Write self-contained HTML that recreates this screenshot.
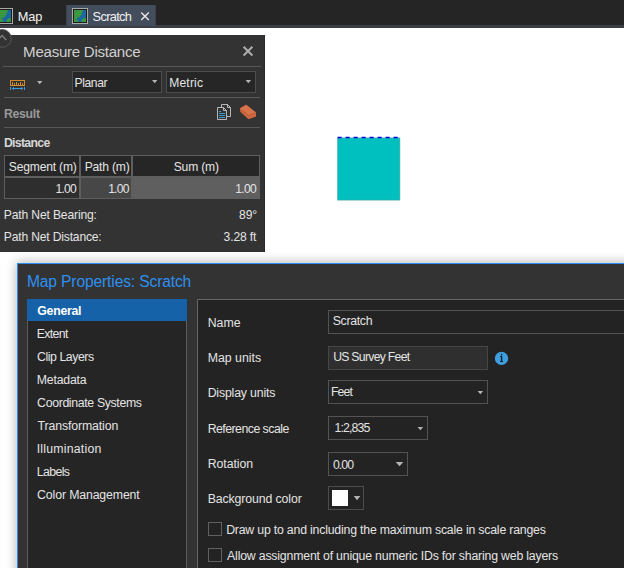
<!DOCTYPE html>
<html lang="en">
<head>
<meta charset="utf-8">
<title>Map Properties: Scratch</title>
<style>
html,body{margin:0;padding:0;overflow:hidden;}
html{width:624px;height:568px;}
body{width:624px;height:568px;position:relative;overflow:hidden;background:#ffffff;font-family:"Liberation Sans",sans-serif;}
.abs,.t,svg{position:absolute;}
svg{overflow:visible;}
.t{white-space:nowrap;line-height:20px;height:20px;}
.box{position:absolute;box-sizing:border-box;}
.ln{position:absolute;left:4px;width:256px;height:1px;background:#585858;}
.fld{position:absolute;box-sizing:border-box;background:#232323;border:1px solid #535353;}
.chk{position:absolute;box-sizing:border-box;width:14px;height:14px;left:208px;background:#232323;border:1px solid #606060;}
.cell{position:absolute;box-sizing:border-box;}
</style>
</head>
<body>
<div id="screen" style="position:absolute;left:0;top:0;width:624px;height:568px;overflow:hidden;background:#ffffff;">
<!-- document tab bar -->
<div class="abs" id="tabbar" style="left:0;top:0;width:624px;height:25px;background:#252525;"></div>
<div class="abs" id="tabstrip" style="left:0;top:25px;width:624px;height:3px;background:#3c3e46;"></div>
<div class="abs" id="tab-scratch" style="left:66px;top:5px;width:88px;height:21px;background:#444d5c;border-left:1px solid #3b414d;border-right:1px solid #3b414d;"></div>
<svg id="ico-map1" style="left:-3px;top:8px" width="16" height="16" viewBox="0 0 16 16"><rect x=".5" y=".5" width="15" height="15" fill="none" stroke="#a9a9a6"/><rect x="1.5" y="1.5" width="13" height="13" fill="#3c983e" stroke="#1c1c1c"/><path d="M11 2H14V10.5L12 10L10 11.5L9.3 14H6.6L6.2 12L4.5 11.2L5.5 9.6L7.2 9.6L9 7.2L10 5Z" fill="#1b67a1"/></svg>
<svg id="ico-map2" style="left:72px;top:8px" width="16" height="16" viewBox="0 0 16 16"><rect x=".5" y=".5" width="15" height="15" fill="none" stroke="#a9a9a6"/><rect x="1.5" y="1.5" width="13" height="13" fill="#3c983e" stroke="#1c1c1c"/><path d="M11 2H14V10.5L12 10L10 11.5L9.3 14H6.6L6.2 12L4.5 11.2L5.5 9.6L7.2 9.6L9 7.2L10 5Z" fill="#1b67a1"/></svg>
<svg id="ico-tabclose" style="left:140px;top:11px" width="10" height="10" viewBox="0 0 10 10"><path d="M1.2 1.5L8.8 9M8.8 1.5L1.2 9" stroke="#e8e8e8" stroke-width="1.4" fill="none"/></svg>

<!-- map view content -->
<svg id="square" style="left:337px;top:136px" width="64" height="65" viewBox="0 0 64 65"><rect x="0.5" y="1.9" width="62.4" height="62.2" fill="#00bfbf" stroke="#4fa9a9" stroke-width="0.6"/><line x1="0.6" y1="1.5" x2="63" y2="1.5" stroke="#0000ee" stroke-width="1.5" stroke-dasharray="4 4"/></svg>

<!-- Measure Distance panel -->
<div class="abs" id="measure" style="left:0;top:35px;width:264px;height:217px;background:#333333;border-right:1px solid #2a2a2a;"></div>
<svg id="ico-collapse" style="left:-8px;top:28px" width="21" height="21" viewBox="-10.5 -10.5 21 21"><circle cx="-0.2" cy="-0.1" r="8.9" fill="#333333" stroke="#585858" stroke-width="1"/><path d="M-4.6 1.4L-0.4 -3L3.8 1.4" fill="none" stroke="#7c7c7c" stroke-width="1.5"/></svg>
<svg id="ico-close" style="left:242px;top:45px" width="12" height="12" viewBox="0 0 12 12"><path d="M1.6 1.8L10.4 10.4M10.4 1.8L1.6 10.4" stroke="#ababab" stroke-width="2.1" fill="none"/></svg>
<div class="ln" style="top:66px;left:3px;width:258px"></div>
<div class="ln" style="top:97px"></div>
<div class="ln" style="top:127px"></div>
<svg id="ico-ruler" style="left:9px;top:79px" width="17" height="12" viewBox="0 0 17 12"><rect x="1.5" y="1.5" width="14" height="5" fill="none" stroke="#cf8a2e"/><path d="M3.5 3V6M5.5 4.2V6M7.5 3V6M9.5 4.2V6M11.5 3V6M13.5 4.2V6" stroke="#cf8a2e" stroke-width="1"/><path d="M1.5 8V11M15.5 8V11M3 9.5H14" stroke="#3a9fe0" stroke-width="1" fill="none"/><path d="M2.6 9.5L5 8V11ZM14.4 9.5L12 8V11Z" fill="#3a9fe0"/></svg>
<svg id="ico-dd0" style="left:37px;top:81px" width="6" height="4" viewBox="0 0 6 4"><path d="M0 0H5.4L2.7 3.2Z" fill="#b4b4b4"/></svg>
<div class="box" id="cmb-planar" style="left:72px;top:71px;width:90px;height:22px;background:#262626;border:1px solid #4d4d4d;"></div>
<div class="box" id="cmb-metric" style="left:166px;top:71px;width:90px;height:22px;background:#262626;border:1px solid #4d4d4d;"></div>
<svg style="left:152px;top:80px" width="6" height="4" viewBox="0 0 6 4"><path d="M0 0H5.4L2.7 3.2Z" fill="#b4b4b4"/></svg>
<svg style="left:245px;top:80px" width="7" height="4" viewBox="0 0 7 4"><path d="M0.6 0H6.1L3.35 3.2Z" fill="#b4b4b4"/></svg>
<svg id="ico-copy" style="left:217px;top:104px" width="15" height="16" viewBox="0 0 15 16"><path d="M4.5 3V0.5H10.5L13.5 3.5V12.5H10" fill="none" stroke="#b8b8b8"/><path d="M10.5 0.5V3.5H13.5" fill="none" stroke="#b8b8b8"/><path d="M0.5 3.5H6.5L9.5 6.5V15.5H0.5Z" fill="#333333" stroke="#b8b8b8"/><path d="M6.5 3.5V6.5H9.5" fill="none" stroke="#b8b8b8"/><path d="M2 7.5H4M2 9.5H8M2 11.5H8M2 13.5H8" stroke="#3b9ad6" stroke-width="1"/></svg>
<svg id="ico-eraser" style="left:239px;top:104px" width="18" height="16" viewBox="0 0 18 16"><path d="M1.6 4.6L7.1 1.3L16.4 8.6V12.2L9.7 14.5L1.9 7.6Z" fill="#cf6840" stroke="#cf6840" stroke-width="1.2" stroke-linejoin="round"/><path d="M1.6 4.6L7.1 1.3L16.4 8.6L9.6 10.9Z" fill="#d8744b"/><path d="M1.5 5.3L9.6 11.5L16.5 9.1" fill="none" stroke="#b9572f" stroke-width="0.8"/></svg>

<!-- result table -->
<div class="cell" style="left:4px;top:155px;width:256px;height:44px;background:#5e5e5e;"></div>
<div class="cell" id="h1" style="left:5px;top:156px;width:74px;height:20px;background:#262626;"></div>
<div class="cell" id="h2" style="left:81px;top:156px;width:50px;height:20px;background:#262626;"></div>
<div class="cell" id="h3" style="left:133px;top:156px;width:126px;height:20px;background:#262626;"></div>
<div class="cell" id="d1" style="left:5px;top:178px;width:74px;height:20px;background:#2e2e2e;"></div>
<div class="cell" id="d2" style="left:81px;top:178px;width:50px;height:20px;background:#474747;"></div>
<div class="cell" id="d3" style="left:133px;top:178px;width:126px;height:20px;background:#5f5f5f;"></div>

<!-- Map Properties dialog -->
<div class="box" id="dialog" style="left:17px;top:263px;width:620px;height:320px;background:#333333;border:1px solid #2b8df2;box-shadow:0 0 10px 1px rgba(0,0,0,0.28);"></div>
<div class="box" id="list" style="left:27px;top:299px;width:160px;height:280px;background:#252525;border:1px solid #5c5c5c;"></div>
<div class="abs" id="list-sel" style="left:27px;top:299px;width:160px;height:22px;background:#1562a8;"></div>
<div class="box" id="pane" style="left:197px;top:299px;width:440px;height:280px;background:#232323;border:1px solid #656565;"></div>
<div class="fld" id="f-name" style="left:328px;top:310px;width:320px;height:24px;"></div>
<div class="fld" id="f-mapunits" style="left:328px;top:346px;width:160px;height:24px;background:#2f2f2f;border-color:#464646;"></div>
<svg id="ico-info" style="left:494px;top:351px" width="15" height="15" viewBox="0 0 15 15"><circle cx="7.5" cy="7.4" r="6.65" fill="#3d9fe0"/><rect x="6.9" y="2.7" width="1.4" height="1.7" rx="0.6" fill="#10222f"/><path d="M6 5H8.3V10H9.1V11H6V10H6.9V6H6Z" fill="#10222f"/></svg>
<div class="fld" id="f-display" style="left:328px;top:380px;width:160px;height:24px;"></div>
<svg style="left:477px;top:391px" width="7" height="4" viewBox="0 0 7 4"><path d="M0.6 0H6.2L3.4 3.3Z" fill="#b4b4b4"/></svg>
<div class="fld" id="f-refscale" style="left:328px;top:416px;width:100px;height:24px;"></div>
<svg style="left:417px;top:427px" width="7" height="4" viewBox="0 0 7 4"><path d="M0.6 0H6.2L3.4 3.3Z" fill="#b4b4b4"/></svg>
<div class="fld" id="f-rotation" style="left:328px;top:452px;width:80px;height:24px;"></div>
<svg style="left:395px;top:461px" width="9" height="6" viewBox="0 0 9 6"><path d="M0.7 0.9H8.3L4.5 5.3Z" fill="#b4b4b4"/></svg>
<div class="fld" id="f-bgcolor" style="left:328px;top:486px;width:36px;height:24px;border-color:#4c4c4c;"></div>
<div class="abs" id="swatch" style="left:332px;top:490px;width:16px;height:16px;background:#ffffff;"></div>
<svg style="left:353px;top:496px" width="8" height="5" viewBox="0 0 8 5"><path d="M0.8 0H7.3L4.05 4.2Z" fill="#b4b4b4"/></svg>
<div class="chk" style="top:522px"></div>
<div class="chk" style="top:548px"></div>

<span class="t" style="left:17.80px;top:6.56px;font-size:12.8px;color:#f2f2f2;letter-spacing:-0.191px;">Map</span>
<span class="t" style="left:92.60px;top:6.56px;font-size:12.8px;color:#f2f2f2;letter-spacing:-0.679px;">Scratch</span>
<span class="t" style="left:23.12px;top:41.77px;font-size:15.1px;color:#d0d0d0;letter-spacing:-0.280px;">Measure Distance</span>
<span class="t" style="left:74.55px;top:72.81px;font-size:12.1px;color:#e4e4e4;letter-spacing:-0.394px;">Planar</span>
<span class="t" style="left:169.25px;top:72.81px;font-size:12.1px;color:#e4e4e4;letter-spacing:0.159px;">Metric</span>
<span class="t" style="left:3.93px;top:103.74px;font-size:12.3px;color:#9a9a9a;font-weight:700;letter-spacing:-0.292px;">Result</span>
<span class="t" style="left:3.93px;top:132.74px;font-size:12.3px;color:#d6d6d6;font-weight:700;letter-spacing:-0.700px;">Distance</span>
<span class="t" style="left:8.82px;top:156.81px;font-size:12.1px;color:#e4e4e4;letter-spacing:-0.183px;">Segment (m)</span>
<span class="t" style="left:84.65px;top:156.81px;font-size:12.1px;color:#e4e4e4;letter-spacing:-0.189px;">Path (m)</span>
<span class="t" style="left:173.73px;top:156.81px;font-size:12.1px;color:#e4e4e4;letter-spacing:-0.18px;">Sum (m)</span>
<span class="t" style="left:55.44px;top:178.81px;font-size:12.1px;color:#e4e4e4;letter-spacing:-0.731px;">1.00</span>
<span class="t" style="left:108.14px;top:178.81px;font-size:12.1px;color:#e4e4e4;letter-spacing:-0.731px;">1.00</span>
<span class="t" style="left:235.34px;top:178.81px;font-size:12.1px;color:#e4e4e4;letter-spacing:-0.731px;">1.00</span>
<span class="t" style="left:3.85px;top:204.81px;font-size:12.1px;color:#e4e4e4;letter-spacing:-0.148px;">Path Net Bearing:</span>
<span class="t" style="left:239.08px;top:204.81px;font-size:12.1px;color:#e4e4e4;letter-spacing:-0.15px;">89°</span>
<span class="t" style="left:3.85px;top:226.81px;font-size:12.1px;color:#e4e4e4;letter-spacing:-0.173px;">Path Net Distance:</span>
<span class="t" style="left:223.62px;top:226.81px;font-size:12.1px;color:#e4e4e4;letter-spacing:-0.133px;">3.28 ft</span>
<span class="t" style="left:26.98px;top:271.59px;font-size:15.6px;color:#2d90f0;letter-spacing:-0.134px;">Map Properties: Scratch</span>
<span class="t" style="left:37.32px;top:300.74px;font-size:12.3px;color:#ffffff;font-weight:700;letter-spacing:-0.266px;">General</span>
<span class="t" style="left:36.74px;top:323.74px;font-size:12.3px;color:#e4e4e4;letter-spacing:-0.630px;">Extent</span>
<span class="t" style="left:37.12px;top:346.74px;font-size:12.3px;color:#e4e4e4;letter-spacing:-0.446px;">Clip Layers</span>
<span class="t" style="left:36.74px;top:369.74px;font-size:12.3px;color:#e4e4e4;letter-spacing:-0.200px;">Metadata</span>
<span class="t" style="left:37.12px;top:392.74px;font-size:12.3px;color:#e4e4e4;letter-spacing:-0.346px;">Coordinate Systems</span>
<span class="t" style="left:37.51px;top:415.74px;font-size:12.3px;color:#e4e4e4;letter-spacing:-0.113px;">Transformation</span>
<span class="t" style="left:36.74px;top:438.74px;font-size:12.3px;color:#e4e4e4;letter-spacing:0.212px;">Illumination</span>
<span class="t" style="left:36.74px;top:461.74px;font-size:12.3px;color:#e4e4e4;letter-spacing:-0.600px;">Labels</span>
<span class="t" style="left:37.12px;top:484.74px;font-size:12.3px;color:#e4e4e4;letter-spacing:-0.131px;">Color Management</span>
<span class="t" style="left:207.64px;top:312.74px;font-size:12.3px;color:#e4e4e4;letter-spacing:0.050px;">Name</span>
<span class="t" style="left:207.64px;top:347.74px;font-size:12.3px;color:#e4e4e4;letter-spacing:0.027px;">Map units</span>
<span class="t" style="left:207.64px;top:382.74px;font-size:12.3px;color:#e4e4e4;letter-spacing:-0.165px;">Display units</span>
<span class="t" style="left:207.64px;top:418.74px;font-size:12.3px;color:#e4e4e4;letter-spacing:-0.516px;">Reference scale</span>
<span class="t" style="left:207.64px;top:453.74px;font-size:12.3px;color:#e4e4e4;letter-spacing:-0.037px;">Rotation</span>
<span class="t" style="left:207.64px;top:488.74px;font-size:12.3px;color:#e4e4e4;letter-spacing:-0.100px;">Background color</span>
<span class="t" style="left:332.72px;top:310.74px;font-size:12.3px;color:#e4e4e4;letter-spacing:-0.321px;">Scratch</span>
<span class="t" style="left:333.14px;top:346.77px;font-size:12.2px;color:#e4e4e4;letter-spacing:-0.691px;">US Survey Feet</span>
<span class="t" style="left:331.05px;top:381.77px;font-size:12.2px;color:#e4e4e4;letter-spacing:-0.867px;">Feet</span>
<span class="t" style="left:334.43px;top:417.74px;font-size:12.3px;color:#e4e4e4;letter-spacing:-0.862px;">1:2,835</span>
<span class="t" style="left:333.02px;top:454.74px;font-size:12.3px;color:#e4e4e4;letter-spacing:-0.983px;">0.00</span>
<span class="t" style="left:226.14px;top:519.74px;font-size:12.3px;color:#e4e4e4;letter-spacing:-0.194px;">Draw up to and including the maximum scale in scale ranges</span>
<span class="t" style="left:227.10px;top:545.74px;font-size:12.3px;color:#e4e4e4;letter-spacing:-0.189px;">Allow assignment of unique numeric IDs for sharing web layers</span>
</div>
</body>
</html>
